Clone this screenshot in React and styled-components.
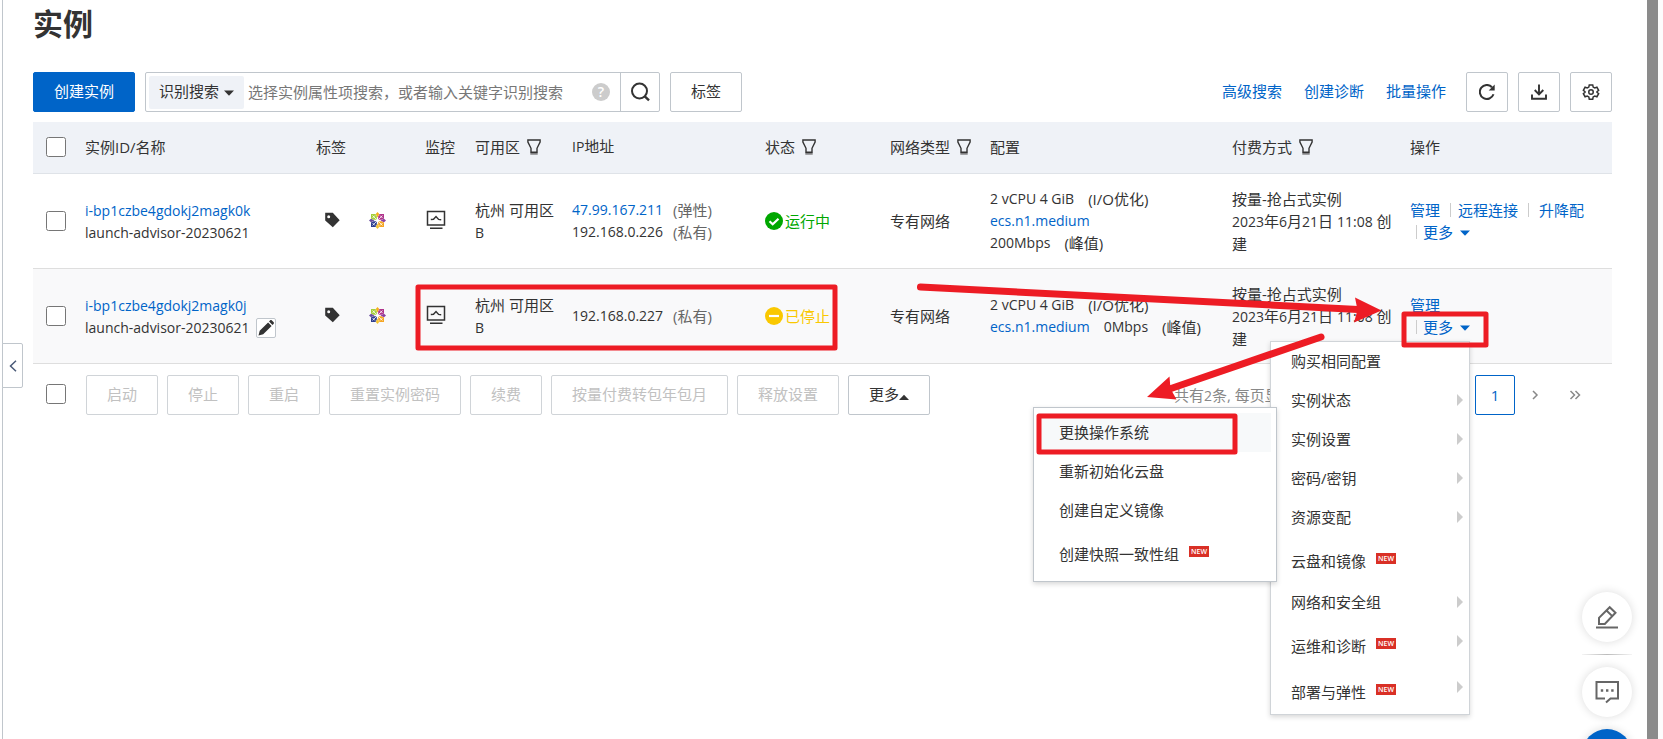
import React, { useState } from "react";
import styled, { createGlobalStyle } from "styled-components";

const GlobalStyle = createGlobalStyle`
  * {
    box-sizing: border-box;
  }
  body {
    margin: 0;
    background: #fff;
    color: #333;
    font-family: "Open Sans", "Noto Sans CJK SC", sans-serif;
    font-size: 15px;
    line-height: 22px;
    overflow: hidden;
  }
  button, input, select {
    font: inherit;
    color: inherit;
  }
  button {
    cursor: pointer;
  }
  a {
    color: #0064c8;
    text-decoration: none;
  }
`;

const rows = [
  {
    id: "i-bp1czbe4gdokj2magk0k",
    name: "launch-advisor-20230621",
    publicIp: "47.99.167.211",
    privateIp: "192.168.0.226",
    running: true,
    bandwidth: "200Mbps",
  },
  {
    id: "i-bp1czbe4gdokj2magk0j",
    name: "launch-advisor-20230621",
    privateIp: "192.168.0.227",
    running: false,
    bandwidth: "0Mbps",
  },
];

const columns = [
  { title: "标签", width: 109 },
  { title: "监控", width: 50 },
  { title: "可用区", width: 97, filter: true },
  { title: <><Latin>IP</Latin>地址</>, width: 193 },
  { title: "状态", width: 125, filter: true },
  { title: "网络类型", width: 100, filter: true },
  { title: "配置", width: 242 },
  { title: "付费方式", width: 178, filter: true },
  { title: "操作" },
];

const batchActions = ["启动", "停止", "重启", "重置实例密码", "续费", "按量付费转包年包月", "释放设置"];

const menuItems = [
  { text: "购买相同配置" },
  { text: "实例状态", arrow: true },
  { text: "实例设置", arrow: true, open: true },
  { text: "密码/密钥", arrow: true },
  { text: "资源变配", arrow: true },
  { text: "云盘和镜像", isNew: true },
  { text: "网络和安全组", arrow: true },
  { text: "运维和诊断", arrow: true, isNew: true },
  { text: "部署与弹性", arrow: true, isNew: true },
];

const subItems = [
  { text: "更换操作系统", active: true },
  { text: "重新初始化云盘" },
  { text: "创建自定义镜像" },
  { text: "创建快照一致性组", isNew: true },
];

function Latin({ children }) {
  return <Small>{children}</Small>;
}

const Caret = ({ up }) => (
  <svg width="10" height="6" viewBox="0 0 10 6" fill="currentColor" aria-hidden="true">
    <path d={up ? "M0 6h10L5 .8z" : "M0 .5h10L5 5.700z"} />
  </svg>
);

const FunnelIcon = () => (
  <svg width="14" height="16" viewBox="0 0 14 16" fill="none" stroke="currentColor" aria-hidden="true">
    <path d="M.9 1h12.200v2L10 9.300v4H4v-4L.9 3z" strokeWidth="1.400" />
    <path d="M3.300 14.700h7.400" strokeWidth="2" opacity=".6" />
  </svg>
);

const TagIcon = () => (
  <svg width="16" height="16" viewBox="0 0 16 16" fill="#333" aria-hidden="true">
    <path fillRule="evenodd" d="M1.200.800h7.600l6.900 7.400-6.900 7L1.200 8.500zM4.700 3.200a1.500 1.500 0 1 0 0 3 1.500 1.500 0 0 0 0-3z" />
  </svg>
);

const corners = ["#a4cf3a", "#b0358c", "#f5a623", "#2f3f8f"];
const tips = ["#f6b01a", "#8a3fa0", "#f4c430", "#6a4ea0"];

const FlowerIcon = () => (
  <svg width="17" height="17" viewBox="0 0 17 17" aria-hidden="true">
    {corners.map((color, i) => (
      <g key={color} transform={`rotate(${i * 90} 8.5 8.5)`}>
        <path d="M2 2h4.500l1.300 2.300v3.500H4.300L2 6.500z" fill={color} />
        <path d="M3.500 3.500l4 4M3.500 6l2.500-2.500" stroke="#fff" strokeWidth=".8" />
      </g>
    ))}
    {tips.map((color, i) => (
      <path key={color} transform={`rotate(${i * 90} 8.5 8.5)`} d="M8.500 0l1.700 2-1.700 3.500L6.800 2z" fill={color} />
    ))}
    <circle cx="8.500" cy="8.500" r="1.500" fill="#fff" />
  </svg>
);

const MonitorIcon = () => (
  <svg width="20" height="20" viewBox="0 0 20 20" fill="none" stroke="#333" strokeWidth="1.500" aria-hidden="true">
    <path d="M1.500 1.500h17v13.500h-17zM4 18.300h12.500M4.800 9.500l2.700-.3L10 6.500l2.600 2.900 2.600.3" />
  </svg>
);

const StatusIcon = ({ running }) => (
  <svg width="18" height="18" viewBox="0 0 18 18" aria-hidden="true">
    <circle cx="9" cy="9" r="9" fill={running ? "#00a700" : "#fac800"} />
    <path
      d={running ? "M4.500 9.200l3.200 3.100 5.800-5.600" : "M4 9h10"}
      fill="none"
      stroke="#fff"
      strokeWidth="2.200"
    />
  </svg>
);

const SearchIcon = () => (
  <svg width="20" height="20" viewBox="0 0 20 20" fill="none" stroke="#333" strokeWidth="2" aria-hidden="true">
    <circle cx="9.500" cy="9" r="7.500" />
    <path d="M14.800 14.300l4.200 4" strokeWidth="2.400" />
  </svg>
);

const RefreshIcon = () => (
  <svg width="16" height="16" viewBox="0 0 16 16" fill="none" stroke="#333" strokeWidth="2" aria-hidden="true">
    <path d="M14.500 10.200A7 7 0 1 1 13 3.200" />
    <path d="M15.700.4v6H9.700z" fill="#333" stroke="none" />
  </svg>
);

const DownloadIcon = () => (
  <svg width="16" height="16" viewBox="0 0 16 16" fill="none" stroke="#333" strokeWidth="1.900" aria-hidden="true">
    <path d="M8 .5v9.500M3.700 6L8 10.300 12.300 6M1 10.500v4.200h14v-4.200" />
  </svg>
);

const GearIcon = () => (
  <svg width="18" height="18" viewBox="0 0 24 24" fill="none" stroke="#333" strokeWidth="2" aria-hidden="true">
    <path d="M9.700 2.500h4.600l.6 3 2.100 1.200 2.900-1 2.300 4-2.300 2v.6l2.300 2-2.300 4-2.900-1-2.100 1.200-.6 3H9.700l-.6-3L7 17.300l-2.900 1-2.300-4 2.300-2v-.6l-2.300-2 2.300-4 2.900 1 2.100-1.200z" />
    <circle cx="12" cy="12" r="3" />
  </svg>
);

const PencilIcon = () => (
  <svg width="16" height="16" viewBox="0 0 16 16" fill="#333" aria-hidden="true">
    <path d="M.5 15.500l1.200-4.700 8.400-8.400 3.500 3.500-8.400 8.400zM11 1.500l1-1c.6-.6 1.300-.6 1.900 0l1.600 1.600c.6.6.6 1.300 0 1.900l-1 1z" />
  </svg>
);

const EditIcon = () => (
  <svg width="24" height="24" viewBox="0 0 24 24" fill="none" stroke="#666" strokeWidth="2" aria-hidden="true">
    <path d="M4 19v-6.200L14.700 2.200l5.800 5.600L9.800 19zM11.500 5.500l5.500 5.400M1 22.500h22" />
  </svg>
);

const ChatIcon = () => (
  <svg width="24" height="24" viewBox="0 0 24 24" fill="none" stroke="#666" strokeWidth="2" aria-hidden="true">
    <path d="M10 18.500H1.500V2h21.500v16.500H15.500L11 22.500" />
    <path d="M5.800 10.500h2.400M11 10.500h2.400M16.200 10.500h2.400" strokeWidth="2.400" />
  </svg>
);

const Chevron = ({ double }) => (
  <svg width="12" height="12" viewBox="0 0 12 12" fill="none" stroke="currentColor" strokeWidth="1.500" aria-hidden="true">
    <path d={double ? "M1.500 2L5.500 6l-4 4M6.500 2l4 4-4 4" : "M4 2l4 4-4 4"} />
  </svg>
);

const CollapseIcon = () => (
  <svg width="8" height="12" viewBox="0 0 8 12" fill="none" stroke="#4a5a78" strokeWidth="1.500" aria-hidden="true">
    <path d="M7 .8L1.500 6 7 11.200" />
  </svg>
);

// highlight strokes drawn over the console
const Marks = () => (
  <MarkLayer aria-hidden="true">
    <g fill="none" stroke="#ed1c24" strokeWidth="5" strokeLinejoin="round">
      <rect x="418" y="287" width="417" height="61" />
      <rect x="1404" y="314" width="82" height="31" />
      <rect x="1039" y="416" width="196" height="36" />
    </g>
    <g stroke="#ed1c24" strokeWidth="7" strokeLinecap="round" fill="#ed1c24">
      <path d="M920.500 287L1358 309.500" />
      <path d="M1321 337L1171 388.500" />
      <path d="M1355 297.500L1381.500 310.500 1354 322.500 1357.500 310z" strokeWidth="0" />
      <path d="M1169.500 376.500L1147 397l29.500 2.500-6-11z" strokeWidth="0" />
    </g>
  </MarkLayer>
);

const SubMenu = () => (
  <SubMenuBox>
    {subItems.map((item) => (
      <MenuItem key={item.text} $new={item.isNew} $active={item.active}>
        <MenuButton type="button">{item.text}</MenuButton>
        {item.isNew && <NewBadge>NEW</NewBadge>}
      </MenuItem>
    ))}
  </SubMenuBox>
);

const MoreMenu = () => (
  <MenuBox>
    {menuItems.map((item) => (
      <MenuItem key={item.text} $new={item.isNew}>
        <MenuButton type="button">{item.text}</MenuButton>
        {item.isNew && <NewBadge>NEW</NewBadge>}
        {item.arrow && <ItemArrow $new={item.isNew} />}
        {item.open && <SubMenu />}
      </MenuItem>
    ))}
  </MenuBox>
);

const InstanceRow = ({ row, checked, onCheck, menuOpen }) => (
  <Row $hover={!row.running}>
    <Cell $check>
      <Checkbox checked={checked} onChange={onCheck} aria-label={row.id} />
    </Cell>
    <Cell>
      <Latin>
        <a href="#detail">{row.id}</a>
        <NameLine>
          {row.name}
          {!row.running && <EditButton type="button" aria-label="编辑"><PencilIcon /></EditButton>}
        </NameLine>
      </Latin>
    </Cell>
    <Cell>
      <TagGroup>
        <TagIcon />
        <FlowerIcon />
      </TagGroup>
    </Cell>
    <Cell>
      <IconLink href="#monitor" aria-label="监控"><MonitorIcon /></IconLink>
    </Cell>
    <Cell>杭州 可用区 <Latin>B</Latin></Cell>
    <Cell>
      {row.publicIp && (
        <IpLine>
          <Latin><a href="#ip">{row.publicIp}</a></Latin>
          <Muted>(弹性)</Muted>
        </IpLine>
      )}
      <IpLine>
        <Latin>{row.privateIp}</Latin>
        <Muted>(私有)</Muted>
      </IpLine>
    </Cell>
    <Cell>
      <Status $running={row.running}>
        <StatusIcon running={row.running} />
        {row.running ? "运行中" : "已停止"}
      </Status>
    </Cell>
    <Cell>专有网络</Cell>
    <Cell>
      <Spec>
        <Latin>2 vCPU 4 GiB</Latin>
        <span>(I/O优化)</span>
      </Spec>
      <Spec>
        <Latin><a href="#spec">ecs.n1.medium</a></Latin>
        {!row.running && <Bandwidth value={row.bandwidth} />}
      </Spec>
      {row.running && <Spec><Bandwidth value={row.bandwidth} /></Spec>}
    </Cell>
    <Cell>
      按量-抢占式实例
      <br />
      <Latin>2023</Latin>年<Latin>6</Latin>月<Latin>21</Latin>日 <Latin>11:08</Latin> 创建
    </Cell>
    <Cell>
      <Actions>
        <a href="#manage">管理</a>
        {row.running && (
          <>
            <Divider />
            <a href="#connect">远程连接</a>
            <Divider $wide />
            <a href="#resize">升降配</a>
          </>
        )}
      </Actions>
      <Actions>
        <MoreAnchor>
          <Divider $first />
          <LinkButton type="button">更多 <Caret /></LinkButton>
          {menuOpen && <MoreMenu />}
        </MoreAnchor>
      </Actions>
    </Cell>
  </Row>
);

const Bandwidth = ({ value }) => (
  <>
    <Latin>{value}</Latin>
    <span>(峰值)</span>
  </>
);

const App = () => {
  const [selected, setSelected] = useState([]);
  const allChecked = selected.length === rows.length;

  const toggle = (id) =>
    setSelected((prev) => (prev.includes(id) ? prev.filter((item) => item !== id) : [...prev, id]));
  const toggleAll = () => setSelected(allChecked ? [] : rows.map((row) => row.id));

  return (
    <>
      <GlobalStyle />
      <Page>
        <Main>
          <CollapseHandle type="button" aria-label="展开"><CollapseIcon /></CollapseHandle>
          <Title>实例</Title>
          <Toolbar>
            <PrimaryButton type="button">创建实例</PrimaryButton>
            <SearchBox>
              <SearchType type="button">识别搜索 <Caret /></SearchType>
              <SearchInput
                type="text"
                aria-label="搜索"
                placeholder="选择实例属性项搜索，或者输入关键字识别搜索"
              />
              <Help>?</Help>
              <SearchButton type="button" aria-label="搜索"><SearchIcon /></SearchButton>
            </SearchBox>
            <Button type="button">标签</Button>
            <ToolLinks>
              <a href="#advanced">高级搜索</a>
              <a href="#diagnose">创建诊断</a>
              <a href="#batch">批量操作</a>
            </ToolLinks>
            <IconButton type="button" aria-label="刷新"><RefreshIcon /></IconButton>
            <IconButton type="button" aria-label="导出"><DownloadIcon /></IconButton>
            <IconButton type="button" aria-label="设置"><GearIcon /></IconButton>
          </Toolbar>
          <Table>
            <colgroup>
              <Col $width={44} />
              <Col $width={231} />
              {columns.map((column, i) => <Col key={i} $width={column.width} />)}
            </colgroup>
            <thead>
              <tr>
                <HeadCell $check>
                  <Checkbox checked={allChecked} onChange={toggleAll} aria-label="全选" />
                </HeadCell>
                <HeadCell>实例ID/名称</HeadCell>
                {columns.map((column, i) => (
                  <HeadCell key={i}>
                    <HeadLabel>
                      <span>{column.title}</span>
                      {column.filter && <FunnelIcon />}
                    </HeadLabel>
                  </HeadCell>
                ))}
              </tr>
            </thead>
            <tbody>
              {rows.map((row, i) => (
                <InstanceRow
                  key={row.id}
                  row={row}
                  checked={selected.includes(row.id)}
                  onCheck={() => toggle(row.id)}
                  menuOpen={i === 1}
                />
              ))}
            </tbody>
          </Table>
          <Footer>
            <FooterCheck>
              <Checkbox checked={allChecked} onChange={toggleAll} aria-label="全选" />
            </FooterCheck>
            {batchActions.map((text) => (
              <Button key={text} type="button" disabled>{text}</Button>
            ))}
            <Button type="button">更多<Caret up /></Button>
            <Pagination>
              <Total>共有<Latin>2</Latin>条, 每页显示:</Total>
              <PageButton type="button" $current>1</PageButton>
              <PageButton type="button" aria-label="下一页"><Chevron /></PageButton>
              <PageButton type="button" aria-label="末页"><Chevron double /></PageButton>
            </Pagination>
          </Footer>
        </Main>
        <ScrollTrack>
          <ScrollThumb />
        </ScrollTrack>
        <FloatBar>
          <FloatButton type="button" aria-label="反馈"><EditIcon /></FloatButton>
          <FloatLine />
          <FloatButton type="button" aria-label="咨询"><ChatIcon /></FloatButton>
          <FloatButton type="button" aria-label="助手" $primary />
        </FloatBar>
        <Marks />
      </Page>
    </>
  );
};

export default App;

const Small = styled.span`
  font-size: 14px;
`;

const Page = styled.div`
  display: flex;
  position: relative;
  min-height: 100vh;
  padding-left: 2px;
`;

const Main = styled.main`
  position: relative;
  flex: 1;
  min-width: 0;
  padding: 4px 35px 0 30px;
  border-left: 1px solid #c0c6cc;
`;

const Title = styled.h1`
  margin: 0 0 28px;
  font-size: 30px;
  line-height: 40px;
  font-weight: 700;
`;

const Toolbar = styled.div`
  display: flex;
  gap: 10px;
  margin-bottom: 10px;
`;

const Button = styled.button`
  height: 40px;
  padding: 0 20px 2px;
  border: 1px solid #c0c6cc;
  border-radius: 2px;
  background: #fff;
  white-space: nowrap;

  &:disabled {
    color: #c1c1c1;
    border-color: #d0d4d8;
    cursor: not-allowed;
  }
`;

const PrimaryButton = styled(Button)`
  border-color: #0064c8;
  background: #0064c8;
  color: #fff;
`;

const SearchBox = styled.div`
  display: flex;
  align-items: center;
  width: 515px;
  height: 40px;
  padding-left: 3px;
  border: 1px solid #c0c6cc;
  border-radius: 2px;
`;

const SearchType = styled.button`
  display: flex;
  align-items: center;
  gap: 5px;
  height: 33px;
  padding: 0 10px 2px;
  border: none;
  border-radius: 2px;
  background: #eff2f7;
  white-space: nowrap;

  svg {
    margin-top: 4px;
  }
`;

const SearchInput = styled.input`
  flex: 1;
  min-width: 0;
  padding: 0 4px;
  border: none;
  outline: none;
  background: none;

  &::placeholder {
    color: #777;
  }
`;

const Help = styled.span`
  width: 18px;
  height: 18px;
  margin: 0 10px;
  border-radius: 50%;
  background: #ccc;
  color: #fff;
  font-size: 14px;
  font-weight: 600;
  line-height: 18px;
  text-align: center;
`;

const SearchButton = styled.button`
  display: flex;
  align-items: center;
  justify-content: center;
  width: 39px;
  height: 38px;
  border: none;
  border-left: 1px solid #c0c6cc;
  background: none;
`;

const ToolLinks = styled.nav`
  display: flex;
  align-items: center;
  gap: 22px;
  margin: 0 10px 0 auto;
  padding-bottom: 2px;
  white-space: nowrap;
`;

const IconButton = styled(Button)`
  display: flex;
  align-items: center;
  justify-content: center;
  width: 42px;
  padding: 0;
`;

const Table = styled.table`
  width: 100%;
  table-layout: fixed;
  border-collapse: separate;
  border-spacing: 0;
`;

const Col = styled.col`
  width: ${(props) => (props.$width ? `${props.$width}px` : "auto")};
`;

const HeadCell = styled.th`
  height: 52px;
  padding: ${(props) => (props.$check ? "0 0 2px 13px" : "0 8px 2px")};
  border-bottom: 1px solid #dfe3e8;
  background: #eff2f7;
  font-weight: 400;
  text-align: left;
  white-space: nowrap;
`;

const HeadLabel = styled.div`
  display: flex;
  align-items: center;
  gap: 7px;
`;

const Row = styled.tr`
  background: ${(props) => (props.$hover ? "#f9f9fa" : "#fff")};
`;

const Cell = styled.td`
  height: 95px;
  padding: ${(props) => (props.$check ? "0 0 0 13px" : "0 8px")};
  border-bottom: 1px solid #dedede;
`;

const Checkbox = styled.input.attrs({ type: "checkbox" })`
  display: block;
  width: 20px;
  height: 20px;
  margin: 0;
`;

const NameLine = styled.div`
  display: flex;
  align-items: center;
  gap: 6px;
  height: 22px;
`;

const EditButton = styled.button`
  display: flex;
  align-items: center;
  justify-content: center;
  width: 20px;
  height: 20px;
  padding: 0;
  border: 1px solid #c0c6cc;
  border-radius: 2px;
  background: #fff;
`;

const TagGroup = styled.div`
  display: flex;
  align-items: center;
  gap: 29px;
  padding: 0 0 2px 8px;
`;

const IconLink = styled.a`
  display: flex;
  padding: 0 0 2px 1px;
`;

const IpLine = styled.div`
  display: flex;
  gap: 10px;
  white-space: nowrap;
`;

const Muted = styled.span`
  color: #666;
`;

const Status = styled.div`
  display: flex;
  align-items: center;
  gap: 2px;
  color: ${(props) => (props.$running ? "#00a700" : "#fac800")};
`;

const Spec = styled.div`
  display: flex;
  gap: 14px;
  white-space: nowrap;
`;

const Actions = styled.div`
  display: flex;
  align-items: center;
  white-space: nowrap;
`;

const Divider = styled.span`
  width: 1px;
  height: 14px;
  margin: ${(props) => (props.$first ? "0 6px" : props.$wide ? "0 10px" : "0 7px 0 10px")};
  background: #ccc;
`;

const MoreAnchor = styled.div`
  display: flex;
  align-items: center;
  position: relative;
`;

const LinkButton = styled.button`
  display: flex;
  align-items: center;
  gap: 7px;
  padding: 0;
  border: none;
  background: none;
  color: #0064c8;

  svg {
    margin-top: 2px;
  }
`;

const MenuBox = styled.ul`
  position: absolute;
  top: 25px;
  right: 0;
  z-index: 10;
  width: 200px;
  margin: 0;
  padding: 0;
  border: 1px solid #d0d4d8;
  background: #fff;
  box-shadow: 0 2px 5px rgba(0, 0, 0, 0.16);
  list-style: none;
`;

const SubMenuBox = styled(MenuBox)`
  top: -13px;
  right: 192px;
  width: 244px;
  padding: 5px;
  border-color: #c0c6cc;
`;

const MenuItem = styled.li`
  display: flex;
  align-items: center;
  position: relative;
  height: ${(props) => (props.$new ? "46px" : "39px")};
  padding: ${(props) => (props.$new ? "3px 6px 0 20px" : "0 6px 0 20px")};
  background: ${(props) => (props.$active ? "#f7f9fa" : "transparent")};
`;

const MenuButton = styled.button`
  padding: 0 0 2px;
  border: none;
  background: none;
  white-space: nowrap;
`;

const NewBadge = styled.span`
  width: 20px;
  height: 11px;
  margin: 0 0 6px 10px;
  background: #d93026;
  color: #fff;
  font-size: 7px;
  font-weight: 600;
  line-height: 11px;
  text-align: center;
`;

const ItemArrow = styled.i`
  align-self: flex-start;
  margin: ${(props) => (props.$new ? "10px" : "13px")} 0 0 auto;
  border: 6px solid transparent;
  border-right-width: 0;
  border-left-color: #ccc;
`;

const Footer = styled.div`
  display: flex;
  align-items: center;
  gap: 9px;
  margin-top: 11px;
`;

const FooterCheck = styled.div`
  width: 44px;
  height: 22px;
  padding-left: 13px;
`;

const Pagination = styled.div`
  display: flex;
  align-items: center;
  margin: 0 17px 0 auto;
  color: #888;
`;

const Total = styled.span`
  width: 301px;
  white-space: nowrap;
`;

const PageButton = styled.button`
  display: flex;
  align-items: center;
  justify-content: center;
  width: 40px;
  height: 40px;
  padding: 0;
  border: 1px solid ${(props) => (props.$current ? "#0064c8" : "transparent")};
  border-radius: 2px;
  background: #fff;
  color: ${(props) => (props.$current ? "#0064c8" : "#888")};
`;

const CollapseHandle = styled.button`
  display: flex;
  align-items: center;
  justify-content: center;
  position: absolute;
  top: 343px;
  left: -1px;
  width: 21px;
  height: 45px;
  padding: 0;
  border: 1px solid #c0c6cc;
  border-radius: 0 2px 2px 0;
  background: #fff;
`;

const ScrollTrack = styled.div`
  display: flex;
  width: 16px;
  background: #fcfcfc;
`;

const ScrollThumb = styled.div`
  width: 11px;
  background: #8b8b8b;
`;

const FloatBar = styled.div`
  display: flex;
  flex-direction: column;
  gap: 12px;
  position: fixed;
  right: 31px;
  bottom: -40px;
  width: 50px;
`;

const FloatButton = styled.button`
  display: flex;
  align-items: center;
  justify-content: center;
  width: 50px;
  height: 50px;
  padding: 0;
  border: none;
  border-radius: 50%;
  background: ${(props) => (props.$primary ? "#0064c8" : "#fff")};
  box-shadow: 0 0 10px rgba(0, 0, 0, 0.14);
`;

const FloatLine = styled.div`
  height: 1px;
  background: linear-gradient(90deg, #f4f4f4, #bbb, #f4f4f4);
`;

const MarkLayer = styled.svg`
  position: absolute;
  top: 0;
  left: 0;
  z-index: 20;
  width: 100%;
  height: 100%;
  pointer-events: none;
`;
